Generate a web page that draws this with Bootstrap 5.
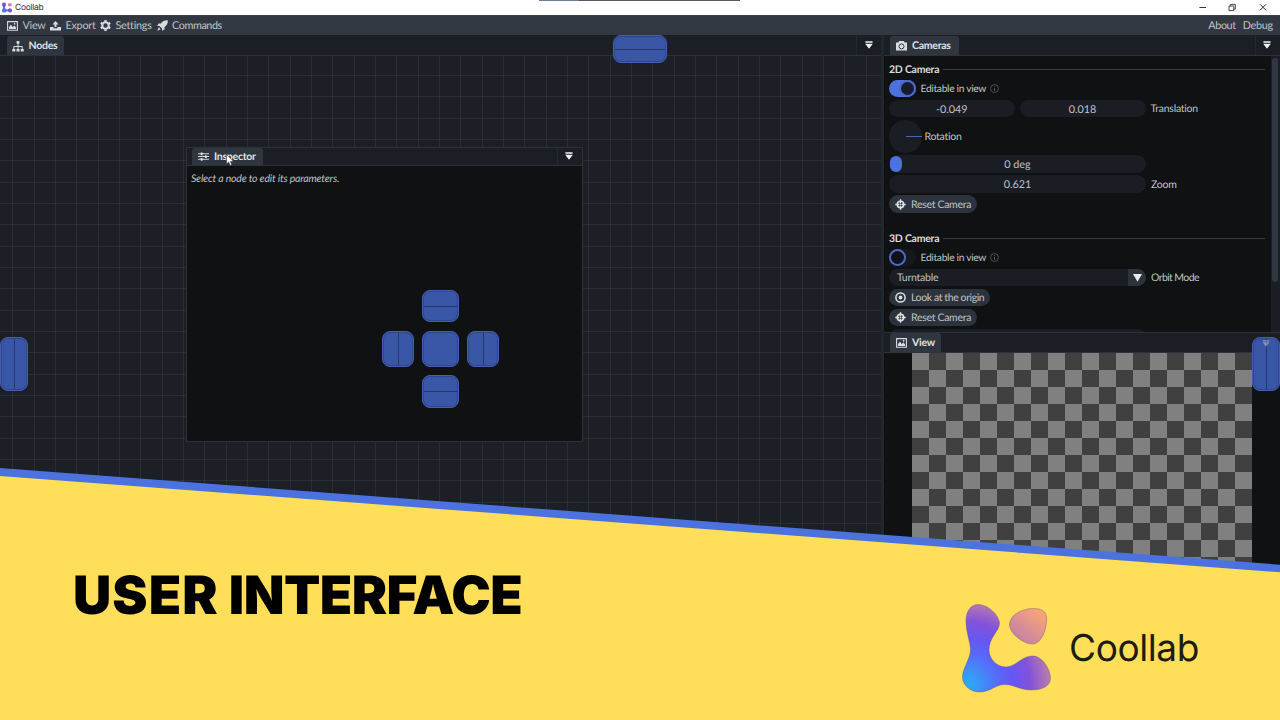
<!DOCTYPE html>
<html lang="en">
<head>
<meta charset="utf-8">
<meta name="viewport" content="width=device-width, initial-scale=1">
<title>Coollab</title>
<link href="https://cdn.jsdelivr.net/npm/bootstrap@5.3.0/dist/css/bootstrap.min.css" rel="stylesheet">
<style>
:root{--bar:#323842;--panel:#1b1e25;--ink:#0f1112;--line:#2d3138;--txt:#bfc3c7;--accent:#4c72e0}
html,body{height:100%}
body{width:1280px;height:720px;overflow:hidden;background:var(--ink);color:var(--txt);font:400 10.5px/14px Lato,"Liberation Sans",sans-serif;letter-spacing:-.25px;text-rendering:geometricPrecision}
svg{display:block;flex:none}
.stage{width:1280px;height:720px}
.titlebar{height:15px;background:#fff;color:#333;font:8.5px/14px Inter,sans-serif;letter-spacing:-.3px}
.titlebar .strip{left:539px;top:0;width:201px;height:1px;background:linear-gradient(90deg,#6c7ba0 40px,#55585e 40px)}
.menus{height:20px;background:var(--bar);border-top:1px solid #3a3f48;font-size:10.8px}
.menus span,.camlist span{padding-top:1.2px}
.tabbar{height:21px;background:var(--panel);border-bottom:1px solid var(--line)}
.tabitem{background:#2f3640;height:19px;margin-top:1px;border-radius:3px 3px 0 0;font-weight:700;color:#dfe2e4}
.arrowbox{width:26px;height:20px;border-left:1px solid #23272e}
.nodes{width:881px}
.canvas{background-color:#1c1f26;
 background-image:
 linear-gradient(90deg,#ffffff10 0 1px,transparent 1px 22px,#ffffff10 22px 23px,transparent 23px 43px,#ffffff10 43px 44px,transparent 44px),
 linear-gradient(#ffffff10 0 1px,transparent 1px 21px,#ffffff10 21px 22px,transparent 22px 43px,#ffffff10 43px 44px,transparent 44px);
 background-size:64px 64px;background-position:12px 19px}
.side{border-left:3px solid #22262d}
.cams{height:276px;background:var(--ink)}
.camlist{width:381px;padding:6px 0 0 5px}
.camlist>*{height:17.5px;margin-bottom:2.5px;flex:none}
.camlist .heading{height:14px;margin-bottom:3.5px;font-weight:700;color:#dadcde}
.heading hr{height:1px;border:0;background:#3a3c40;opacity:1}
.editable{font-size:10.3px;letter-spacing:-.33px;width:66px;white-space:nowrap}
.pillbox{background:#1a1d23;border-radius:9px;height:17.5px}
.pillbox.text-center{font-size:10.8px;letter-spacing:0}
.pillbtn{background:#2d333d;border-radius:9px;height:17.5px;padding:0 6px;gap:5px;letter-spacing:-.3px}
.toggle{width:27px;height:17.5px;border-radius:9px;background:#16181c;margin-right:4.5px}
.toggle i{display:block;width:17px;height:17px;border-radius:50%;border:2px solid #4f69c4;background:#101216}
.toggle.on{background:var(--accent)}
.toggle.on i{margin-left:10px;background:#171c2c}
.dial{width:32.5px;height:32.5px;border-radius:50%;background:#1a1d23}
.dial b{display:block;height:1.5px;width:16px;margin-left:16.5px;background:#4a64b8}
.scroller{width:9px;background:#1a1d24;padding:2px 1px 0}
.scroller b{display:block;width:6px;height:224px;border-radius:4px;background:#313742}
.checker{width:340px;margin-left:28px;background:repeating-conic-gradient(#404040 0 25%,#808080 0 50%) 0 0/34px 34px}
.inspector{left:187px;top:147px;width:396px;height:295px;background:var(--ink);border:1px solid var(--line);border-width:1px 1px 1px 0;box-shadow:-1px 0 var(--line)}
.inspector .tabbar{height:18px}
.guide{background:#3a56a7;border:1.5px solid #465fae;border-radius:8px;box-shadow:inset 0 0 0 1px #2d458c}
.guide.h{background:linear-gradient(#26396f,#26396f) center/100% 1px no-repeat #3a56a7}
.guide.v{background:linear-gradient(90deg,#26396f,#26396f) center/1px 100% no-repeat #3a56a7}
.g-top{left:613px;top:35px;width:54px;height:28px}
.g-left{left:0;top:337px;width:28px;height:54px}
.g-right{left:1252px;top:337px;width:28px;height:54px}
.g-up{left:422px;top:290px;width:37px;height:32px}
.g-mid{left:422px;top:331px;width:37px;height:36px}
.g-down{left:422px;top:375px;width:37px;height:33px}
.g-west{left:382px;top:331px;width:32px;height:36px}
.g-east{left:467px;top:331px;width:32px;height:36px}
.edge{left:0;top:0;width:1280px;height:720px;background:var(--accent);clip-path:polygon(0 468px,100% 564.7px,100% 100%,0 100%)}
.banner{left:0;top:0;width:1280px;height:720px;background:#ffde59;clip-path:polygon(0 476px,100% 572.3px,100% 100%,0 100%)}
.bannertext{padding:562px 81px 0 73px}
.bannertext h1{font:900 53px/66px Inter,"Liberation Sans",sans-serif;color:#000;letter-spacing:-.55px;margin:0}
.bannertext h1 span{letter-spacing:1.1px}
.brand{margin-top:41px}
.brandname{font:400 37px/90px Inter,"Liberation Sans",sans-serif;color:#1c1c10;letter-spacing:-.4px;margin-left:18px}
</style>
</head>
<body>
<svg width="0" height="0" class="position-absolute">
 <defs>
  <linearGradient id="lg" gradientUnits="userSpaceOnUse" x1="0" y1="10" x2="10" y2="0"><stop offset="0" stop-color="#3b8ce4"/><stop offset=".5" stop-color="#7a51d8"/><stop offset="1" stop-color="#f7a36f"/></linearGradient>
  <radialGradient id="rg" gradientUnits="userSpaceOnUse" cx="6" cy="82" r="88"><stop offset="0" stop-color="#28b0f6"/><stop offset=".38" stop-color="#5a66fb"/><stop offset=".52" stop-color="#6458f5"/><stop offset=".72" stop-color="#8352da"/><stop offset="1" stop-color="#c787a0"/></radialGradient>
  <linearGradient id="og" x1="0" y1="1" x2=".75" y2=".1"><stop offset="0" stop-color="#b678b5"/><stop offset="1" stop-color="#f8a279"/></linearGradient>
  <symbol id="pic" viewBox="0 0 11 10"><path fill="none" stroke="#d9dcdf" stroke-width="1.1" d="M.6.6h9.8v8.6H.6z"/><path fill="#d9dcdf" d="M2 8V6l2-2.6L5.6 6 7.4 4.5 9 6.3V8z"/><circle cx="7.6" cy="2.8" r=".9" fill="#d9dcdf"/></symbol>
  <symbol id="down" viewBox="0 0 8 8"><path fill="#f1f2f3" d="M.4.2h7.2v1.5H.4zM.2 2.7h7.6L4 7.8z"/></symbol>
  <symbol id="target" viewBox="0 0 12 12"><circle cx="6" cy="6" r="3.5" fill="none" stroke="#dfe2e5" stroke-width="1.7"/><path stroke="#dfe2e5" stroke-width="1.5" d="M6 .3v4.2M6 7.5v4.2M.3 6h4.2M7.5 6h4.2"/><circle cx="6" cy="6" r="1" fill="#dfe2e5"/></symbol>
  <symbol id="nfo" viewBox="0 0 10 10"><circle cx="5" cy="5" r="4.4" fill="none" stroke="#66696d" stroke-width=".8"/><path stroke="#66696d" d="M5 4.5V7.5M5 2.5v1"/></symbol>
 </defs>
</svg>
<div class="stage position-relative d-flex flex-column overflow-hidden">
 <header class="titlebar position-relative d-flex align-items-center flex-shrink-0">
  <svg style="margin-left:2px" width="10" height="11" viewBox="0 0 10 11"><g fill="url(#lg)"><rect y=".6" width="4" height="4.2" rx="1.7"/><rect x="1" y="3" width="2" height="6"/><rect y="6.3" width="4.4" height="4.2" rx="1.7"/><rect x="2" y="7.4" width="6" height="2"/><rect x="6" y="6.3" width="4" height="4.2" rx="1.7"/></g><rect x="6" y="1" width="3.8" height="3.6" rx="1.5" fill="#c88bb0"/></svg>
  <span style="margin-left:3px;padding-top:1px">Coollab</span>
  <div class="strip position-absolute"></div>
  <svg class="ms-auto" width="81" height="13" viewBox="0 0 81 13"><g fill="none" stroke="#333"><path d="M.5 6.5h6.5M61 3.3l6 6M67 3.3l-6 6"/><path stroke-width=".9" d="M30 5h4.8v4.6H30zM31.4 5V3.4h4.9V8h-1.5"/></g></svg>
 </header>
 <nav class="menus d-flex align-items-center flex-shrink-0">
  <svg style="margin-left:7px" width="11" height="10"><use href="#pic"/></svg><span style="margin-left:4.5px;width:20.5px">View</span>
  <svg style="margin-left:7px" width="11" height="10" viewBox="0 0 11 10"><path fill="#d9dcdf" d="M5.5 0 8.6 3.4H6.5V6h-2V3.4H2.4zM0 6h3.5v1.2h4V6H11v3.6H0z"/></svg><span style="margin-left:4.5px;width:27.5px">Export</span>
  <svg style="margin-left:7px" width="11" height="11" viewBox="0 0 11 11"><circle cx="5.5" cy="5.5" r="3.2" fill="none" stroke="#d9dcdf" stroke-width="2"/><path stroke="#d9dcdf" stroke-width="2.3" d="M5.5 0v1.8M5.5 9.2V11M.8 2.8l1.5.9M8.7 7.3l1.5.9M.8 8.2l1.5-.9M8.7 3.7l1.5-.9"/></svg><span style="margin-left:4.5px;width:33.5px">Settings</span>
  <svg style="margin-left:7.5px" width="11" height="11" viewBox="0 0 11 11"><path fill="#d9dcdf" d="M10.8.2C7.7 0 5.5 1.2 4 3.4L1.6 3.6.2 6l2.2-.1 2.7 2.7-.1 2.2 2.4-1.4.2-2.4C9.8 5.5 11 3.3 10.8.2zM1.8 7.3.3 10.7l3.4-1.5z"/></svg><span style="margin-left:4.5px;letter-spacing:-.4px">Commands</span>
  <span class="ms-auto" style="letter-spacing:-.4px">About</span><span style="margin:0 7px">Debug</span>
 </nav>
 <main class="d-flex flex-grow-1" style="min-height:0">
  <section class="nodes d-flex flex-column">
   <div class="tabbar d-flex">
    <div class="tabitem d-flex align-items-center" style="width:57px;margin-left:7px;padding:1px 0 0 5px;gap:4.5px"><svg width="12" height="11" viewBox="0 0 12 11"><path fill="none" stroke="#d9dcdf" d="M6 2v7M1.8 8.5V5.5h8.4v3"/><path fill="#d9dcdf" d="M4.6 0h2.8v2.8H4.6zM.3 8h3v2.6h-3zM4.5 8h3v2.6h-3zM8.7 8h3v2.6h-3z"/></svg>Nodes</div>
    <div class="arrowbox ms-auto d-flex align-items-center" style="width:25px;padding-left:8px"><svg width="8" height="8"><use href="#down"/></svg></div>
   </div>
   <div class="canvas flex-grow-1"></div>
  </section>
  <section class="side flex-grow-1 d-flex flex-column">
   <div class="tabbar d-flex flex-shrink-0">
    <div class="tabitem d-flex align-items-center" style="width:69px;margin-left:6px;padding:1px 0 0 6px;gap:5px"><svg width="11" height="10" viewBox="0 0 11 10"><path fill="#d9dcdf" d="M3.2 0h4.6l.9 1.4H11v8.2H0V1.4h2.3z"/><circle cx="5.5" cy="5.4" r="2.5" fill="none" stroke="#2f3640"/></svg>Cameras</div>
    <div class="arrowbox ms-auto d-flex align-items-center" style="width:25px;padding-left:7px"><svg width="8" height="8"><use href="#down"/></svg></div>
   </div>
   <div class="cams d-flex justify-content-between overflow-hidden flex-shrink-0">
    <div class="camlist d-flex flex-column">
     <div class="heading d-flex align-items-center"><span>2D Camera</span><hr class="flex-grow-1 my-0 ms-1"></div>
     <div class="d-flex align-items-center"><div class="toggle on"><i></i></div><span class="editable">Editable in view</span><svg style="margin-left:3px" width="9" height="9"><use href="#nfo"/></svg></div>
     <div class="d-flex align-items-center" style="margin-bottom:3.3px"><div class="pillbox text-center" style="width:125.5px;line-height:19px">-0.049</div><div class="pillbox text-center" style="width:126px;margin:0 5px;line-height:19px">0.018</div><span>Translation</span></div>
     <div class="d-flex align-items-center" style="height:32.5px"><div class="dial d-flex align-items-center"><b></b></div><span style="margin-left:3px;padding:0">Rotation</span></div>
     <div class="pillbox position-relative text-center" style="width:257px;line-height:19px">0 deg<b class="position-absolute" style="left:1px;top:1px;width:12px;height:15.5px;border-radius:6px;background:#4c72e0"></b></div>
     <div class="d-flex align-items-center"><div class="pillbox text-center" style="width:257px;margin-right:5px;line-height:19px">0.621</div><span>Zoom</span></div>
     <div class="d-flex" style="margin-bottom:18.7px"><div class="pillbtn d-flex align-items-center"><svg width="11" height="11"><use href="#target"/></svg><span>Reset Camera</span></div></div>
     <div class="heading d-flex align-items-center"><span>3D Camera</span><hr class="flex-grow-1 my-0 ms-1"></div>
     <div class="d-flex align-items-center"><div class="toggle"><i></i></div><span class="editable">Editable in view</span><svg style="margin-left:3px" width="9" height="9"><use href="#nfo"/></svg></div>
     <div class="d-flex align-items-center"><div class="pillbox d-flex align-items-center overflow-hidden" style="width:257px;margin-right:5px;padding-left:8px"><span>Turntable</span><div class="ms-auto d-flex align-items-center justify-content-center h-100" style="width:18px;background:#2d333d"><svg width="9" height="8" viewBox="0 0 9 8"><path fill="#e9ebed" d="M0 0h9L4.5 7.8z"/></svg></div></div><span style="letter-spacing:-.6px">Orbit Mode</span></div>
     <div class="d-flex"><div class="pillbtn d-flex align-items-center"><svg width="11" height="11" viewBox="0 0 11 11"><circle cx="5.5" cy="5.5" r="4.6" fill="none" stroke="#dfe2e5" stroke-width="1.5"/><circle cx="5.5" cy="5.5" r="1.9" fill="#dfe2e5"/></svg><span style="letter-spacing:-.4px">Look at the origin</span></div></div>
     <div class="d-flex"><div class="pillbtn d-flex align-items-center"><svg width="11" height="11"><use href="#target"/></svg><span>Reset Camera</span></div></div>
     <div class="pillbox" style="width:257px"></div>
    </div>
    <div class="scroller"><b></b></div>
   </div>
   <div class="tabbar d-flex flex-shrink-0" style="border-top:1px solid #2d3138">
    <div class="tabitem d-flex align-items-center" style="width:51px;margin:0 0 0 6px;padding:1px 0 0 6px;gap:5px"><svg width="11" height="10"><use href="#pic"/></svg>View</div>
   </div>
   <div class="checker flex-grow-1"></div>
  </section>
 </main>

 <section class="inspector position-absolute">
  <div class="tabbar d-flex">
   <div class="tabitem d-flex align-items-center" style="width:71px;height:17px;margin:0 0 0 5px;padding:0 0 0 6px;gap:5px"><svg width="11" height="9" viewBox="0 0 12 9"><path stroke="#e1e4e6" d="M0 1.5h12M0 4.5h12M0 7.5h12"/><path fill="#e1e4e6" d="M3 0h2v3H3zM7.5 3h2v3h-2zM3 6h2v3H3z"/></svg>Inspector</div>
   <div class="arrowbox ms-auto d-flex align-items-center" style="width:25px;height:17px;padding:0 0 1px 7px"><svg width="8" height="8"><use href="#down"/></svg></div>
  </div>
  <div class="fst-italic" style="padding:6px 0 0 4px;letter-spacing:-.2px">Select a node to edit its parameters.</div>
 </section>

 <div class="guide h position-absolute g-top"></div>
 <div class="guide v position-absolute g-left"></div>
 <div class="guide v position-absolute g-right"><svg class="mx-auto" style="margin-top:2px;opacity:.4" width="8" height="7" viewBox="0 0 8 8"><use href="#down"/></svg></div>
 <div class="guide h position-absolute g-up"></div>
 <div class="guide v position-absolute g-west"></div>
 <div class="guide position-absolute g-mid"></div>
 <div class="guide v position-absolute g-east"></div>
 <div class="guide h position-absolute g-down"></div>
 <svg class="position-absolute" style="left:226px;top:154px" width="9" height="12" viewBox="0 0 9 12"><path fill="#fff" stroke="#222" stroke-width=".5" d="M.5.5v9.5l2.200-2 1.5 3.4 1.6-.7L4.4 7.4h3.2z"/></svg>

 <div class="edge position-absolute"></div>
 <div class="banner position-absolute">
  <div class="bannertext d-flex justify-content-between align-items-start">
   <h1><span>USER</span> INTERFACE</h1>
   <div class="brand d-flex align-items-center">
    <svg width="90" height="90" viewBox="0 0 90 90"><g stroke="#5a4a90" stroke-opacity=".55" stroke-width=".7"><path fill="url(#rg)" d="M5 18C5 8 10 1.5 17 1.5c9 0 20 9 21.5 18C39 28 28 34 28 47c0 8 7 17 17 17 10 0 16-12 28-11 9 1 16.500 14 16.500 22 0 8-8 12-19 12-12 0-17-5.500-27-5.500-9 0-14 7.500-25 7.500C9 89 1.500 82 1.500 74 1.500 65 9 57 9.500 47 9.500 39 5 30 5 18z"/><path fill="url(#og)" d="M48.500 21C49 12 61 5.500 72 5.500c9 0 13 3 13.500 9 .5 10-4 26-14 26.500C62 41 48 30 48.500 21z"/></g></svg>
    <span class="brandname">Coollab</span>
   </div>
  </div>
 </div>
</div>
<script src="https://cdn.jsdelivr.net/npm/bootstrap@5.3.0/dist/js/bootstrap.bundle.min.js"></script>
</body>
</html>
